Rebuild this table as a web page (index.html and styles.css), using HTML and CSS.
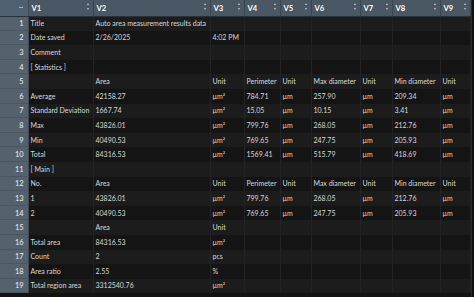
FILE: index.html
```html
<!DOCTYPE html>
<html lang="en">
<head>
  <meta charset="UTF-8">
  <title>Auto area measurement results</title>
  <link rel="stylesheet" href="styles.css">
</head>
<body>
  <div class="grid-wrap">
    <table class="grid">
      <colgroup>
        <col class="c-num"><col class="c1"><col class="c2"><col class="c3"><col class="c4">
        <col class="c5"><col class="c6"><col class="c7"><col class="c8"><col class="c9">
      </colgroup>
      <thead>
        <tr>
          <th class="corner"><span class="dash"></span></th>
          <th>V1<i class="sort"></i></th>
          <th>V2<i class="sort"></i></th>
          <th>V3<i class="sort"></i></th>
          <th>V4<i class="sort"></i></th>
          <th>V5<i class="sort"></i></th>
          <th>V6<i class="sort"></i></th>
          <th>V7<i class="sort"></i></th>
          <th>V8<i class="sort"></i></th>
          <th>V9<i class="sort"></i></th>
        </tr>
      </thead>
      <tbody>
        <tr><td class="n">1</td><td>Title</td><td>Auto area measurement results data</td><td></td><td></td><td></td><td></td><td></td><td></td><td></td></tr>
        <tr><td class="n">2</td><td>Date saved</td><td>2/26/2025</td><td>4:02 PM</td><td></td><td></td><td></td><td></td><td></td><td></td></tr>
        <tr><td class="n">3</td><td>Comment</td><td></td><td></td><td></td><td></td><td></td><td></td><td></td><td></td></tr>
        <tr><td class="n">4</td><td>[ Statistics ]</td><td></td><td></td><td></td><td></td><td></td><td></td><td></td><td></td></tr>
        <tr><td class="n">5</td><td></td><td>Area</td><td>Unit</td><td>Perimeter</td><td>Unit</td><td>Max diameter</td><td>Unit</td><td>Min diameter</td><td>Unit</td></tr>
        <tr><td class="n">6</td><td>Average</td><td>42158.27</td><td>µm²</td><td>784.71</td><td>µm</td><td>257.90</td><td>µm</td><td>209.34</td><td>µm</td></tr>
        <tr><td class="n">7</td><td>Standard Deviation</td><td>1667.74</td><td>µm²</td><td>15.05</td><td>µm</td><td>10.15</td><td>µm</td><td>3.41</td><td>µm</td></tr>
        <tr><td class="n">8</td><td>Max</td><td>43826.01</td><td>µm²</td><td>799.76</td><td>µm</td><td>268.05</td><td>µm</td><td>212.76</td><td>µm</td></tr>
        <tr><td class="n">9</td><td>Min</td><td>40490.53</td><td>µm²</td><td>769.65</td><td>µm</td><td>247.75</td><td>µm</td><td>205.93</td><td>µm</td></tr>
        <tr><td class="n">10</td><td>Total</td><td>84316.53</td><td>µm²</td><td>1569.41</td><td>µm</td><td>515.79</td><td>µm</td><td>418.69</td><td>µm</td></tr>
        <tr><td class="n">11</td><td>[ Main ]</td><td></td><td></td><td></td><td></td><td></td><td></td><td></td><td></td></tr>
        <tr><td class="n">12</td><td>No.</td><td>Area</td><td>Unit</td><td>Perimeter</td><td>Unit</td><td>Max diameter</td><td>Unit</td><td>Min diameter</td><td>Unit</td></tr>
        <tr><td class="n">13</td><td>1</td><td>43826.01</td><td>µm²</td><td>799.76</td><td>µm</td><td>268.05</td><td>µm</td><td>212.76</td><td>µm</td></tr>
        <tr><td class="n">14</td><td>2</td><td>40490.53</td><td>µm²</td><td>769.65</td><td>µm</td><td>247.75</td><td>µm</td><td>205.93</td><td>µm</td></tr>
        <tr><td class="n">15</td><td></td><td>Area</td><td>Unit</td><td></td><td></td><td></td><td></td><td></td><td></td></tr>
        <tr><td class="n">16</td><td>Total area</td><td>84316.53</td><td>µm²</td><td></td><td></td><td></td><td></td><td></td><td></td></tr>
        <tr><td class="n">17</td><td>Count</td><td>2</td><td>pcs</td><td></td><td></td><td></td><td></td><td></td><td></td></tr>
        <tr><td class="n">18</td><td>Area ratio</td><td>2.55</td><td>%</td><td></td><td></td><td></td><td></td><td></td><td></td></tr>
        <tr><td class="n">19</td><td>Total region area</td><td>3312540.76</td><td>µm²</td><td></td><td></td><td></td><td></td><td></td><td></td></tr>
      </tbody>
    </table>
    <div class="vscroll"></div>
  </div>
</body>
</html>
```

FILE: styles.css
```css
* { margin: 0; padding: 0; box-sizing: border-box; }
html, body { width: 100%; height: 100%; overflow: hidden; background: #121212; }

body {
  font-family: Lato, "Open Sans", sans-serif;
  font-size: 7px;
  color: #d9d9d9;
}

.grid-wrap {
  display: flex;
  height: 100%;
}

.grid {
  width: 470px;
  border-collapse: collapse;
  table-layout: fixed;
  align-self: flex-start;
}

.c-num { width: 28px; }
.c1 { width: 65px; }
.c2 { width: 117px; }
.c3 { width: 34px; }
.c4 { width: 36px; }
.c5 { width: 31px; }
.c6 { width: 49px; }
.c7 { width: 32px; }
.c8 { width: 48px; }
.c9 { width: 30px; }

/* header */
.grid th {
  position: relative;
  height: 16px;
  padding: 0 0 0 3px;
  background: #4a5764;
  border-right: 1px solid #3b4550;
  border-bottom: 1px solid #2a3138;
  color: #fff;
  font-weight: 700;
  font-size: 7.6px;
  line-height: 12px;
  text-align: left;
}
.grid th.corner {
  background: #4f6070;
  border-right: 1px solid #3e4a56;
}
.dash {
  position: absolute;
  right: 5px;
  top: 7px;
  width: 4px;
  height: 1px;
  background: #9fb4c8;
}

/* sort arrows */
.sort {
  position: absolute;
  right: 3px;
  top: 3px;
  width: 3px;
  height: 7px;
}
.sort::before,
.sort::after {
  content: "";
  position: absolute;
  left: 0;
  border-left: 1.5px solid transparent;
  border-right: 1.5px solid transparent;
}
.sort::before { top: 0; border-bottom: 2.5px solid #c5ccd3; }
.sort::after { bottom: 0; border-top: 2.5px solid #c5ccd3; }

/* body rows */
.grid td {
  height: 14.6px;
  padding: 0 0 0 2px;
  white-space: nowrap;
  border-right: 1px solid #232323;
  line-height: 11px;
}
.grid tbody tr:nth-child(odd) td { background: #1c1c1c; }
.grid tbody tr:nth-child(even) td { background: #141414; }

.grid td.n {
  background: #55626e !important;
  border-right: 1px solid #3f4a55;
  text-align: right;
  padding: 0 4px 0 0;
  color: #eef1f4;
  font-size: 7.4px;
  box-shadow: inset 0 -1px 0 #4a5661;
}

.vscroll {
  flex: 1;
  background: #101010;
  border-left: 1px solid #2a2a2a;
}
```
